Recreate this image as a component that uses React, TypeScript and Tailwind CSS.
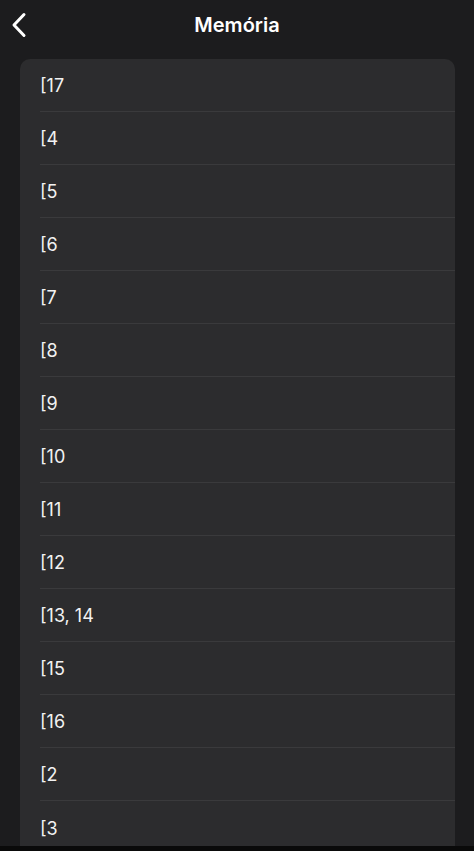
import React from "react";

const rows = ["[17", "[4", "[5", "[6", "[7", "[8", "[9", "[10", "[11", "[12", "[13, 14", "[15", "[16", "[2", "[3"];

export default function App() {
  return (
    <div className="h-[851px] w-full overflow-hidden bg-[#1c1c1e] flex flex-col" style={{ fontFamily: "Inter, 'Noto Sans', sans-serif" }}>
      <div className="h-[59px] shrink-0 relative flex items-start justify-center">
        <button className="absolute left-[8px] top-[11px] w-[22px] h-[28px] flex items-center justify-center">
          <svg width="18" height="26" viewBox="0 0 18 26" fill="none">
            <path d="M14 2.5 L4 13 L14 23.5" stroke="white" strokeWidth="3" strokeLinecap="round" strokeLinejoin="round" />
          </svg>
        </button>
        <div className="mt-[12px] text-[20px] leading-[26px] font-semibold text-white">Memória</div>
      </div>
      <div className="flex-1 overflow-hidden px-[19px]">
        <div className="ml-[1px] h-full rounded-t-[10px] bg-[#2c2c2e] overflow-hidden">
          {rows.map((r, i) => (
            <div key={i} className="pl-[20px]">
              <div className={`h-[53px] flex items-center text-[18px] text-[#f2f2f2] ${i < rows.length - 1 ? "border-b border-[#3a3a3c]" : ""}`}>
                <span className="mt-[1px]">{r}</span>
              </div>
            </div>
          ))}
        </div>
      </div>
      <div className="h-[5px] shrink-0 bg-[#0a0a0a]" />
    </div>
  );
}
